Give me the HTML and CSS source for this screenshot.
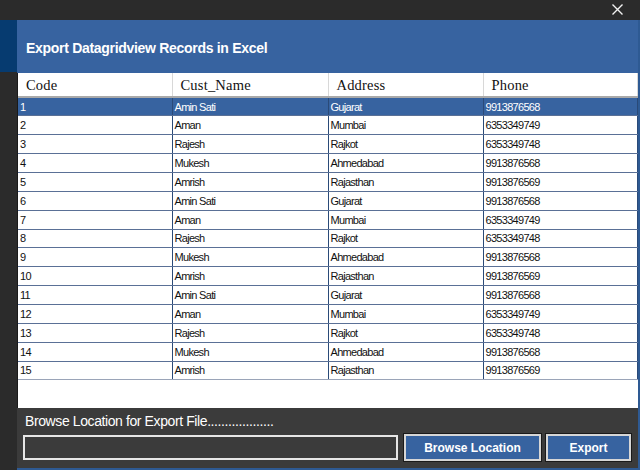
FILE: index.html
```html
<!DOCTYPE html>
<html lang="en">
<head>
    <meta charset="UTF-8">
    <title>Export Datagridview Records in Excel</title>
    <link rel="stylesheet" href="styles.css">
</head>
<body>
    <div class="titlebar">
        <svg class="close" width="11" height="11" viewBox="0 0 11 11">
            <path d="M0.5 0.5 L10.5 10.5 M10.5 0.5 L0.5 10.5" stroke="#f2f2f2" stroke-width="1.4" fill="none"/>
        </svg>
    </div>
    <div class="main">
        <div class="side"><div class="side-accent"></div></div>
        <div class="form">
            <div class="header">Export Datagridview Records in Excel</div>
            <div class="grid">
                <table>
                    <thead>
                        <tr><th>Code</th><th>Cust_Name</th><th>Address</th><th>Phone</th></tr>
                    </thead>
                    <tbody>
                        <tr class="selected"><td>1</td><td>Amin Sati</td><td>Gujarat</td><td>9913876568</td></tr>
                        <tr><td>2</td><td>Aman</td><td>Mumbai</td><td>6353349749</td></tr>
                        <tr><td>3</td><td>Rajesh</td><td>Rajkot</td><td>6353349748</td></tr>
                        <tr><td>4</td><td>Mukesh</td><td>Ahmedabad</td><td>9913876568</td></tr>
                        <tr><td>5</td><td>Amrish</td><td>Rajasthan</td><td>9913876569</td></tr>
                        <tr><td>6</td><td>Amin Sati</td><td>Gujarat</td><td>9913876568</td></tr>
                        <tr><td>7</td><td>Aman</td><td>Mumbai</td><td>6353349749</td></tr>
                        <tr><td>8</td><td>Rajesh</td><td>Rajkot</td><td>6353349748</td></tr>
                        <tr><td>9</td><td>Mukesh</td><td>Ahmedabad</td><td>9913876568</td></tr>
                        <tr><td>10</td><td>Amrish</td><td>Rajasthan</td><td>9913876569</td></tr>
                        <tr><td>11</td><td>Amin Sati</td><td>Gujarat</td><td>9913876568</td></tr>
                        <tr><td>12</td><td>Aman</td><td>Mumbai</td><td>6353349749</td></tr>
                        <tr><td>13</td><td>Rajesh</td><td>Rajkot</td><td>6353349748</td></tr>
                        <tr><td>14</td><td>Mukesh</td><td>Ahmedabad</td><td>9913876568</td></tr>
                        <tr><td>15</td><td>Amrish</td><td>Rajasthan</td><td>9913876569</td></tr>
                    </tbody>
                </table>
            </div>
            <div class="bottom">
                <div class="label">Browse Location for Export File...................</div>
                <div class="controls">
                    <div class="path"></div>
                    <button class="btn browse">Browse Location</button>
                    <button class="btn export">Export</button>
                </div>
            </div>
        </div>
    </div>
</body>
</html>
```

FILE: styles.css
```css
* {
    margin: 0;
    padding: 0;
    box-sizing: border-box;
}
body {
    width: 640px;
    height: 470px;
    background: #2b2b2b;
    font-family: "Liberation Sans", Arial, sans-serif;
    overflow: hidden;
}
.titlebar {
    height: 20px;
    background: #2b2b2b;
    display: flex;
    justify-content: flex-end;
    align-items: center;
    padding-right: 17px;
    padding-bottom: 1px;
}
.close {
    display: block;
}
.main {
    display: flex;
    height: 450px;
}
.side {
    width: 17px;
    flex-shrink: 0;
    background: #2b2b2b;
}
.side-accent {
    height: 52px;
    background: #063b70;
}
.form {
    flex: 1;
    min-width: 0;
    display: flex;
    flex-direction: column;
    border-right: 2px solid #2e5a93;
}
.header {
    height: 53px;
    background: #3763a0;
    color: #fff;
    font-weight: bold;
    font-size: 14px;
    letter-spacing: -0.3px;
    padding-left: 9px;
    padding-top: 2px;
    display: flex;
    align-items: center;
}
.grid {
    height: 335px;
    background: #fff;
    border-left: 1px solid #1a1a1a;
}
table {
    border-collapse: collapse;
    width: 620px;
    table-layout: fixed;
}
th {
    height: 24px;
    font-family: "Liberation Serif", "Times New Roman", serif;
    font-weight: normal;
    font-size: 14.5px;
    letter-spacing: 0.2px;
    text-align: left;
    padding-left: 8px;
    padding-top: 2px;
    color: #111;
    border-right: 1px solid #d8d8d8;
    border-bottom: 2px solid #a9a9a9;
}
th:nth-child(1) { width: 154px; }
th:nth-child(2) { width: 156px; }
th:nth-child(3) { width: 155px; }
td {
    height: 18.86px;
    font-size: 11px;
    letter-spacing: -0.7px;
    color: #111;
    padding-left: 2px;
    border-right: 1px solid #2a4a78;
    border-bottom: 1px solid #5a7096;
    white-space: nowrap;
}
tbody tr:last-child td {
    border-bottom: 1px solid #9aa4b8;
}
tr.selected td {
    background: #3763a0;
    color: #fff;
}
.bottom {
    flex: 1;
    background: #3b3b3b;
    border-bottom: 2px solid #2e5a93;
    padding: 5px 0 0 6px;
}
.label {
    color: #fff;
    font-size: 14px;
    letter-spacing: -0.4px;
    padding-left: 2px;
    height: 21px;
}
.controls {
    display: flex;
}
.path {
    width: 375px;
    height: 25px;
    margin-top: 1px;
    border: 2px solid #e6e6e6;
    background: #3b3b3b;
}
.btn {
    height: 27px;
    background: #3763a0;
    border: 2px solid #d6d6d6;
    outline: 1px solid #1a1a1a;
    color: #fff;
    font-family: "Liberation Sans", Arial, sans-serif;
    font-weight: bold;
    font-size: 12px;
}
.browse {
    width: 137px;
    margin-left: 6px;
}
.export {
    width: 85px;
    margin-left: 5px;
}
```
